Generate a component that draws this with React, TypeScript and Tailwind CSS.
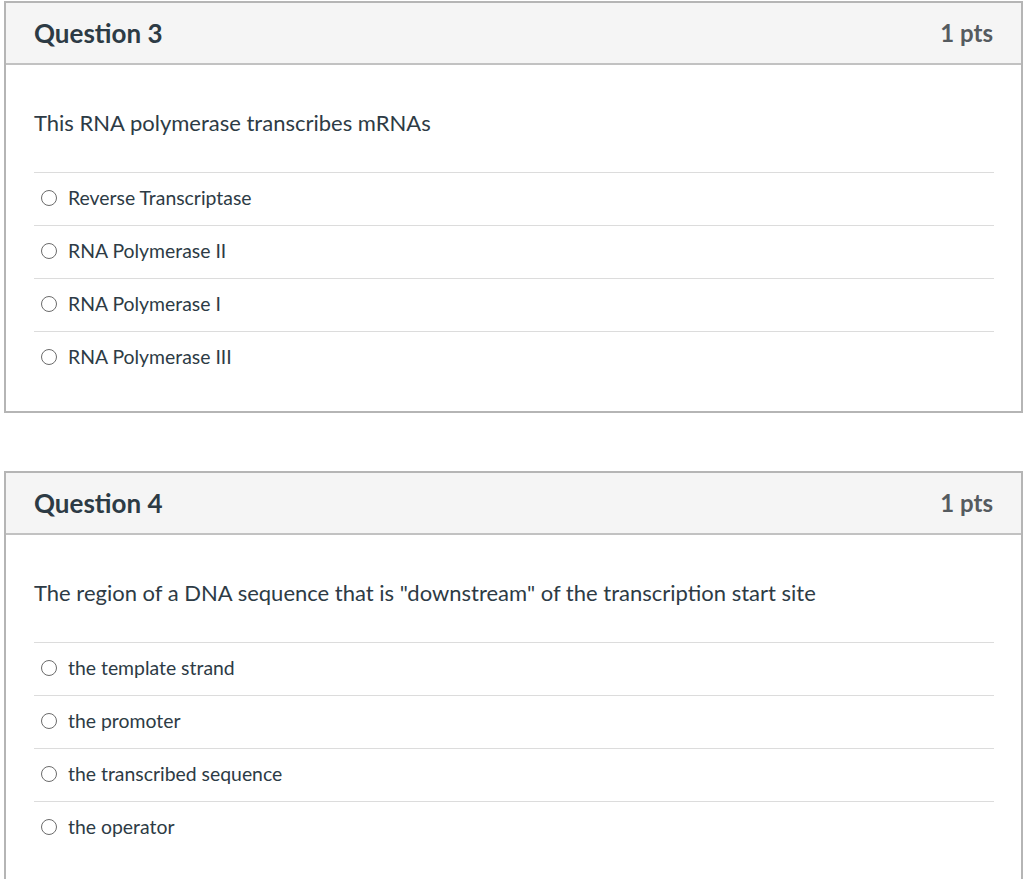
const questions = [
  {
    title: "Question 3",
    points: "1 pts",
    text: "This RNA polymerase transcribes mRNAs",
    answers: [
      "Reverse Transcriptase",
      "RNA Polymerase II",
      "RNA Polymerase I",
      "RNA Polymerase III",
    ],
  },
  {
    title: "Question 4",
    points: "1 pts",
    text: 'The region of a DNA sequence that is "downstream" of the transcription start site',
    answers: [
      "the template strand",
      "the promoter",
      "the transcribed sequence",
      "the operator",
    ],
  },
];

type Question = (typeof questions)[number];

function QuestionCard({ q }: { q: Question }) {
  return (
    <div className="border-2 border-[#b5b5b5] bg-white">
      <div className="flex h-[62px] items-center justify-between border-b-2 border-[#c2c2c2] bg-[#f5f5f5] px-[28px]">
        <h2 className="text-[26px] font-bold text-[#2d3b45]">{q.title}</h2>
        <span className="text-[24px] font-bold text-[#555b60]">{q.points}</span>
      </div>
      <div className="pt-[44px] pb-[27px] pl-[28px] pr-[27px]">
        <p className="mb-[35px] text-[22px] leading-[28px] text-[#2d3b45]">{q.text}</p>
        <ul>
          {q.answers.map((a) => (
            <li
              key={a}
              className="flex h-[53px] items-center gap-[11px] border-t border-[#dcdcdc] pl-[7px] pb-[3px]"
            >
              <span className="h-[16px] w-[16px] shrink-0 rounded-full border border-[#6b6b6b] bg-white" />
              <span className="text-[19.4px] text-[#2d3b45]">{a}</span>
            </li>
          ))}
        </ul>
      </div>
    </div>
  );
}

export default function App() {
  return (
    <div
      className="min-h-screen bg-white pt-px pl-[4px] pr-px"
      style={{ fontFamily: "Lato, 'Liberation Sans', sans-serif" }}
    >
      <div className="flex flex-col gap-[58px]">
        {questions.map((q) => (
          <QuestionCard key={q.title} q={q} />
        ))}
      </div>
    </div>
  );
}
